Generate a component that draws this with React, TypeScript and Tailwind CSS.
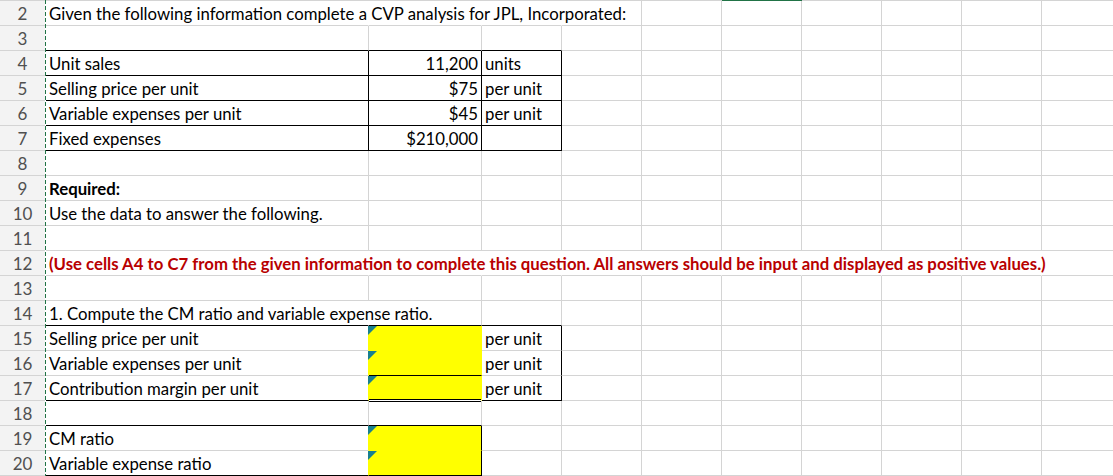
import React from 'react';

type Cell = {
  t?: string;
  al?: 'r';
  bold?: boolean;
  red?: boolean;
  y?: boolean;
  tri?: boolean;
  r?: 'k' | 'y' | 't' | 'g';
  b?: 'k' | 'y' | 'w' | 'g';
  x?: string;
};

const RB: Record<string, string> = {
  g: 'border-r-[#d4d4d4]',
  k: 'border-r-black',
  y: 'border-r-[#ffff00]',
  t: 'border-r-transparent',
};
const BB: Record<string, string> = {
  g: 'border-b-[#d4d4d4]',
  k: 'border-b-black',
  y: 'border-b-[#ffff00]',
  w: 'border-b-white',
};

const W = ['w-[323px]', 'w-[113px]', 'w-[80px]', 'w-[80px]', 'w-[80px]', 'w-[80px]', 'w-[80px]', 'w-[80px]', 'w-[80px]', 'w-[80px]'];

const T: Cell = { r: 't' };
const K: Cell = { r: 'k', b: 'k' };

const rows: Record<number, Cell[]> = {
  2: [{ t: 'Given the following information complete a CVP analysis for JPL, Incorporated:', r: 't' }, T, T],
  3: [{ b: 'k' }, { b: 'k' }, { b: 'k' }],
  4: [{ ...K, t: 'Unit sales' }, { ...K, t: '11,200', al: 'r' }, { ...K, t: 'units' }],
  5: [{ ...K, t: 'Selling price per unit' }, { ...K, t: '$75', al: 'r' }, { ...K, t: 'per unit' }],
  6: [{ ...K, t: 'Variable expenses per unit' }, { ...K, t: '$45', al: 'r' }, { ...K, t: 'per unit' }],
  7: [{ ...K, t: 'Fixed expenses' }, { ...K, t: '$210,000', al: 'r' }, { ...K }],
  9: [{ t: 'Required:', bold: true }],
  10: [{ t: 'Use the data to answer the following.' }],
  12: [
    {
      t: '(Use cells A4 to C7 from the given information to complete this question. All answers should be input and displayed as positive values.)',
      bold: true,
      red: true,
      r: 't',
    },
    T, T, T, T, T, T, T, T,
  ],
  14: [{ t: '1. Compute the CM ratio and variable expense ratio.', r: 't', b: 'k' }, { b: 'k' }, { b: 'k' }],
  15: [
    { t: 'Selling price per unit', r: 'y' },
    { y: true, tri: true, r: 'y', b: 'y' },
    { t: 'per unit', r: 'k' },
  ],
  16: [
    { t: 'Variable expenses per unit', r: 'y' },
    { y: true, tri: true, r: 'y', b: 'k' },
    { t: 'per unit', r: 'k' },
  ],
  17: [
    { t: 'Contribution margin per unit', r: 'y', b: 'k' },
    { y: true, tri: true, r: 'y', b: 'w', x: 'shadow-[inset_0_-1px_0_#000]' },
    { t: 'per unit', r: 'k', b: 'k' },
  ],
  18: [{ b: 'k' }, { b: 'k', x: 'shadow-[inset_0_1px_0_#000]' }],
  19: [
    { t: 'CM ratio', r: 'y' },
    { y: true, tri: true, r: 'k', b: 'y' },
  ],
  20: [
    { t: 'Variable expense ratio', r: 'y', b: 'k' },
    { y: true, tri: true, r: 'k', b: 'k' },
  ],
};

const rowNums = Array.from({ length: 19 }, (_, i) => i + 2);

function Tri() {
  return (
    <svg className="absolute -left-px top-0" width="9" height="9" viewBox="0 0 9 9">
      <polygon points="0,0 9,0 0,9" fill="#18808f" />
    </svg>
  );
}

export default function App() {
  return (
    <div
      className="flex w-[1113px] h-[476px] overflow-hidden bg-white text-[16.75px] text-black"
      style={{ fontFamily: 'Lato, "Open Sans", sans-serif' }}
    >
      <div className="w-[45px] shrink-0 flex flex-col bg-[#f3f3f3]">
        <div className="h-px shrink-0 bg-[#d4d4d4]" />
        {rowNums.map((n) => (
          <div
            key={n}
            className="h-[25px] shrink-0 border-b border-[#d4d4d4] flex items-end justify-center pb-px text-[#505050] text-[17px] leading-[20px]"
          >
            {n}
          </div>
        ))}
      </div>
      <div className="w-px shrink-0 self-stretch bg-[repeating-linear-gradient(to_bottom,#217346_0px,#217346_4px,#ffffff_4px,#ffffff_6px)]" />
      <div className="flex flex-col shrink-0">
        <div className="flex h-px shrink-0">
          {W.map((w, i) => (
            <div key={i} className={`${w} shrink-0 h-px ${i === 5 ? 'bg-[#217346]' : 'bg-[#d4d4d4]'}`} />
          ))}
        </div>
        {rowNums.map((n) => {
          const cells = rows[n] || [];
          return (
            <div key={n} className="flex h-[25px] shrink-0">
              {W.map((w, i) => {
                const c: Cell = cells[i] || {};
                return (
                  <div
                    key={i}
                    className={`${w} relative shrink-0 h-[25px] border-r border-b ${RB[c.r || 'g']} ${BB[c.b || 'g']} ${
                      c.y ? 'bg-[#ffff00]' : ''
                    } ${c.x || ''} flex items-end pb-px px-[3px] ${c.al === 'r' ? 'justify-end' : 'justify-start'}`}
                  >
                    {c.tri && <Tri />}
                    {c.t && (
                      <span
                        className={`whitespace-nowrap leading-[20px] ${c.bold ? 'font-bold' : ''} ${
                          c.red ? 'text-[#b80000]' : ''
                        }`}
                      >
                        {c.t}
                      </span>
                    )}
                  </div>
                );
              })}
            </div>
          );
        })}
      </div>
    </div>
  );
}
